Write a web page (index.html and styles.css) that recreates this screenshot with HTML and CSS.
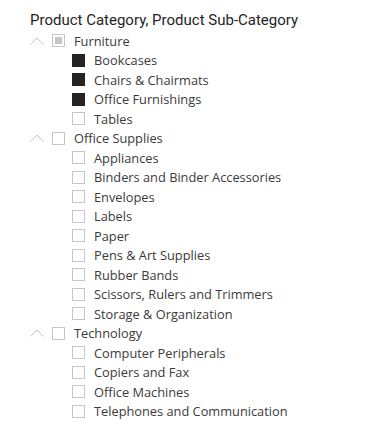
FILE: index.html
```html
<!DOCTYPE html>
<html lang="en">
<head>
  <meta charset="UTF-8">
  <title>Product Category slicer</title>
  <link rel="stylesheet" href="styles.css">
</head>
<body>
  <div class="slicer">
    <div class="slicer-title">Product Category, Product Sub-Category</div>
    <div class="tree">
      <div class="row parent">
        <svg class="chevron" width="14" height="8" viewBox="0 0 14 8"><polyline points="0.5,7.5 7,1 13.5,7.5" /></svg>
        <span class="box partial"></span>
        <span class="label">Furniture</span>
      </div>
      <div class="row child"><span class="box checked"></span><span class="label">Bookcases</span></div>
      <div class="row child"><span class="box checked"></span><span class="label">Chairs &amp; Chairmats</span></div>
      <div class="row child"><span class="box checked"></span><span class="label">Office Furnishings</span></div>
      <div class="row child"><span class="box"></span><span class="label">Tables</span></div>

      <div class="row parent">
        <svg class="chevron" width="14" height="8" viewBox="0 0 14 8"><polyline points="0.5,7.5 7,1 13.5,7.5" /></svg>
        <span class="box"></span>
        <span class="label">Office Supplies</span>
      </div>
      <div class="row child"><span class="box"></span><span class="label">Appliances</span></div>
      <div class="row child"><span class="box"></span><span class="label">Binders and Binder Accessories</span></div>
      <div class="row child"><span class="box"></span><span class="label">Envelopes</span></div>
      <div class="row child"><span class="box"></span><span class="label">Labels</span></div>
      <div class="row child"><span class="box"></span><span class="label">Paper</span></div>
      <div class="row child"><span class="box"></span><span class="label">Pens &amp; Art Supplies</span></div>
      <div class="row child"><span class="box"></span><span class="label">Rubber Bands</span></div>
      <div class="row child"><span class="box"></span><span class="label">Scissors, Rulers and Trimmers</span></div>
      <div class="row child"><span class="box"></span><span class="label">Storage &amp; Organization</span></div>

      <div class="row parent">
        <svg class="chevron" width="14" height="8" viewBox="0 0 14 8"><polyline points="0.5,7.5 7,1 13.5,7.5" /></svg>
        <span class="box"></span>
        <span class="label">Technology</span>
      </div>
      <div class="row child"><span class="box"></span><span class="label">Computer Peripherals</span></div>
      <div class="row child"><span class="box"></span><span class="label">Copiers and Fax</span></div>
      <div class="row child"><span class="box"></span><span class="label">Office Machines</span></div>
      <div class="row child"><span class="box"></span><span class="label">Telephones and Communication</span></div>
    </div>
  </div>
</body>
</html>
```

FILE: styles.css
```css
body {
  margin: 0;
  padding: 0;
  background-color: #fff;
  font-family: 'Open Sans', 'Liberation Sans', sans-serif;
}

.slicer {
  padding: 10px 0 0 30px;
}

.slicer-title {
  font-family: 'Roboto', 'Liberation Sans', sans-serif;
  font-size: 15px;
  line-height: 20px;
  color: #252423;
}

.tree {
  margin-top: 1px;
}

.row {
  display: flex;
  align-items: center;
  height: 19.5px;
  font-size: 12.8px;
  color: #3b3a39;
}

.row.child {
  padding-left: 42px;
}

.chevron {
  margin-right: 8px;
}

.chevron polyline {
  fill: none;
  stroke: #c8c6c4;
  stroke-width: 1;
}

.box {
  box-sizing: border-box;
  width: 13px;
  height: 13px;
  border: 1px solid #c8c6c4;
  margin-right: 9px;
  display: flex;
  justify-content: center;
  align-items: center;
  flex-shrink: 0;
}

.box.checked {
  background: #252423;
  border-color: #252423;
}

.box.partial::after {
  content: '';
  width: 7px;
  height: 7px;
  background: #c8c6c4;
}

.label {
  white-space: nowrap;
}
```
